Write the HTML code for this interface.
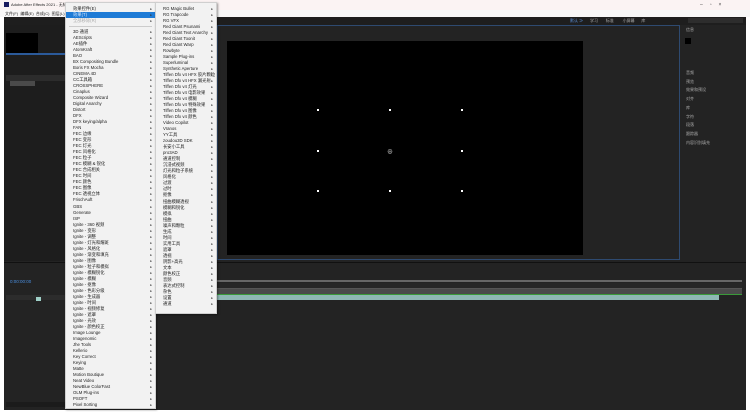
<!DOCTYPE html>
<html><head><meta charset="utf-8"><style>
*{margin:0;padding:0;box-sizing:border-box}
body{width:750px;height:412px;overflow:hidden;background:#fff;font-family:"Liberation Sans","Noto Sans CJK SC",sans-serif;position:relative}
.a{position:absolute}
.m{position:absolute;background:#f2f2f2;border:1px solid #cfcfcf;box-shadow:1px 1px 2px rgba(0,0,0,.4)}
.m div{height:6.03px;line-height:6px;font-size:4.3px;color:#222;padding-left:7px;position:relative;white-space:nowrap}
.m div:after{content:"▸";position:absolute;right:3px;font-size:3.5px;color:#333}
.d{position:absolute;width:2px;height:2px;background:#fff}
.t{font-size:4px;color:#aaa;position:absolute;white-space:nowrap}
</style></head><body>
<div class="a" style="left:0;top:0;width:750px;height:10px;background:#fbf3f3"></div>
<div class="a" style="left:4px;top:2px;width:5px;height:5px;background:#1a1a5e"></div>
<div class="t" style="left:11px;top:2px;color:#222">Adobe After Effects 2021 - 无标题项目.aep</div>
<div class="t" style="left:700px;top:2px;color:#444;font-size:5px">–&nbsp;&nbsp;&nbsp;&nbsp;&nbsp;▫&nbsp;&nbsp;&nbsp;&nbsp;&nbsp;×</div>
<div class="a" style="left:0;top:10px;width:750px;height:7px;background:#f7f7f7"></div>
<div class="t" style="left:5px;top:11px;color:#222">文件(F)&nbsp; 编辑(E)&nbsp; 合成(C)&nbsp; 图层(L)</div>
<!-- main dark UI -->
<div class="a" style="left:4px;top:17px;width:742px;height:393px;background:#232323"></div>
<div class="a" style="left:4px;top:17px;width:742px;height:8px;background:#1e1e1e"></div>
<div class="t" style="left:570px;top:18px;color:#5b8fd8">默认 ≫</div>
<div class="t" style="left:590px;top:18px">学习&nbsp;&nbsp;&nbsp;&nbsp;&nbsp;&nbsp;&nbsp;标准&nbsp;&nbsp;&nbsp;&nbsp;&nbsp;&nbsp;&nbsp;&nbsp;小屏幕&nbsp;&nbsp;&nbsp;&nbsp;&nbsp;&nbsp;库</div>
<div class="a" style="left:688px;top:18px;width:55px;height:5px;background:#2d2d2d"></div>
<!-- left project panel -->
<div class="a" style="left:4px;top:25px;width:61px;height:236px;background:#1d1d1d"></div>
<div class="a" style="left:6px;top:33px;width:32px;height:20px;background:#000"></div>
<div class="a" style="left:6px;top:53px;width:59px;height:2px;background:#2b5a9a"></div>
<div class="a" style="left:6px;top:75px;width:59px;height:6px;background:#2c2c2c"></div>
<div class="a" style="left:10px;top:81px;width:25px;height:5px;background:#4a4a4a"></div>
<!-- viewer -->
<div class="a" style="left:217px;top:25px;width:463px;height:235px;background:#232323;border:1px solid #2e4a70"></div>
<div class="a" style="left:227px;top:41px;width:356px;height:214px;background:#000"></div>
<div class="d" style="left:317px;top:109px"></div><div class="d" style="left:389px;top:109px"></div><div class="d" style="left:461px;top:109px"></div>
<div class="d" style="left:317px;top:150px"></div><div class="t" style="left:387px;top:147px;color:#ccc;font-size:6px">⊕</div><div class="d" style="left:461px;top:150px"></div>
<div class="d" style="left:317px;top:190px"></div><div class="d" style="left:389px;top:190px"></div><div class="d" style="left:461px;top:190px"></div>
<div class="a" style="left:229px;top:264px;width:20px;height:4px;background:#333"></div>
<!-- right panel -->
<div class="a" style="left:681px;top:25px;width:65px;height:385px;background:#232323"></div>
<div class="a" style="left:685px;top:38px;width:6px;height:6px;background:#000"></div>
<div class="t" style="left:686px;top:27px">信息</div>
<div class="t" style="left:686px;top:69px;line-height:8.7px">音频<br>预览<br>效果和预设<br>对齐<br>库<br>字符<br>段落<br>跟踪器<br>内容识别填充</div>
<!-- timeline -->
<div class="a" style="left:4px;top:262px;width:742px;height:148px;background:#232323;border-top:1px solid #111"></div>
<div class="t" style="left:10px;top:279px;color:#4a8fe0;font-size:4.5px">0:00:00:00</div>
<div class="a" style="left:6px;top:295px;width:200px;height:5px;background:#2c2c2c"></div>
<div class="a" style="left:36px;top:297px;width:5px;height:4px;background:#9fd0c8"></div>
<div class="a" style="left:217px;top:280px;width:525px;height:2px;background:#666"></div>
<div class="a" style="left:217px;top:283px;width:525px;height:6px;background:#262626;border-bottom:1px solid #555"></div>
<div class="a" style="left:217px;top:289px;width:525px;height:5px;background:#4a4a4a"></div>
<div class="a" style="left:217px;top:294px;width:525px;height:1px;background:#3a9a3a"></div>
<div class="a" style="left:217px;top:295px;width:502px;height:5px;background:#8fb8b4"></div>
<div class="a" style="left:6px;top:402px;width:60px;height:5px;background:#1b1b1b"></div>
<!-- menu 1 -->
<div class="m" style="left:65px;top:2px;width:91px;height:407px">
<div style="margin-top:3px">效果控件(E)</div><div style="background:#1e7bd6;color:#cfe3fa">效果(T)</div><div style="color:#aaa">全部移除(R)</div>
<p style="height:1px;background:#ccc;margin:2px 3px"></p>
<div>3D 通道</div><div>AEScripts</div><div>AE插件</div><div>AtomKraft</div><div>BAO</div><div>BX Compositing Bundle</div><div>Boris FX Mocha</div><div>CINEMA 4D</div><div>CC工具箱</div><div>CROSSPHERE</div><div>Cinaplus</div><div>Composite Wizard</div><div>Digital Anarchy</div><div>Distort</div><div>DFX</div><div>DFX keying/alpha</div><div>FAN</div><div>FEC 边缘</div><div>FEC 变形</div><div>FEC 灯光</div><div>FEC 风格化</div><div>FEC 粒子</div><div>FEC 模糊 &amp; 锐化</div><div>FEC 合成相关</div><div>FEC 时间</div><div>FEC 颜色</div><div>FEC 图像</div><div>FEC 透视立体</div><div>FrischAuft</div><div>GBS</div><div>Generate</div><div>ISP</div><div>Ignite - 360 视频</div><div>Ignite - 变形</div><div>Ignite - 调整</div><div>Ignite - 灯光和耀斑</div><div>Ignite - 风格化</div><div>Ignite - 渐变和填充</div><div>Ignite - 图像</div><div>Ignite - 粒子和模拟</div><div>Ignite - 模糊锐化</div><div>Ignite - 模糊</div><div>Ignite - 抠像</div><div>Ignite - 色彩分级</div><div>Ignite - 生成器</div><div>Ignite - 时间</div><div>Ignite - 视频修复</div><div>Ignite - 遮罩</div><div>Ignite - 光效</div><div>Ignite - 颜色校正</div><div>Image Lounge</div><div>Imagenomic</div><div>Jhe Tools</div><div>Kellerio</div><div>Key Correct</div><div>Keying</div><div>Matte</div><div>Motion Boutique</div><div>Neat Video</div><div>NewBlue ColorFast</div><div>OLM Plug-ins</div><div>PSOFT</div><div>Pixel Sorting</div>
</div>
<!-- menu 2 -->
<div class="m" style="left:155px;top:2px;width:62px;height:312px">
<div style="margin-top:3px">RG Magic Bullet</div><div>RG Trapcode</div><div>RG VFX</div><div>Red Giant Psunami</div><div>Red Giant Text Anarchy</div><div>Red Giant Toonit</div><div>Red Giant Warp</div><div>Rowbyte</div><div>Sample Plug-ins</div><div>Superluminal</div><div>Synthetic Aperture</div><div>Tiffen Dfx v4 HFX 胶片颗粒</div><div>Tiffen Dfx v4 HFX 漏光射</div><div>Tiffen Dfx v4 灯光</div><div>Tiffen Dfx v4 电影效果</div><div>Tiffen Dfx v4 模糊</div><div>Tiffen Dfx v4 特殊效果</div><div>Tiffen Dfx v4 图像</div><div>Tiffen Dfx v4 颜色</div><div>Video Copilot</div><div>Vranos</div><div>YY工具</div><div>zoudou3D SDK</div><div>长安小工具</div><div>pro3AD</div><div>通道控制</div><div>沉浸式视频</div><div>灯光和粒子系统</div><div>风格化</div><div>过渡</div><div>过时</div><div>抠像</div><div>扭曲模糊透视</div><div>模糊和锐化</div><div>模拟</div><div>扭曲</div><div>噪声和颗粒</div><div>生成</div><div>时间</div><div>实用工具</div><div>遮罩</div><div>透视</div><div>阴影+高光</div><div>文本</div><div>颜色校正</div><div>音频</div><div>表达式控制</div><div>杂色</div><div>设置</div><div>通道</div>
</div>
</body></html>
